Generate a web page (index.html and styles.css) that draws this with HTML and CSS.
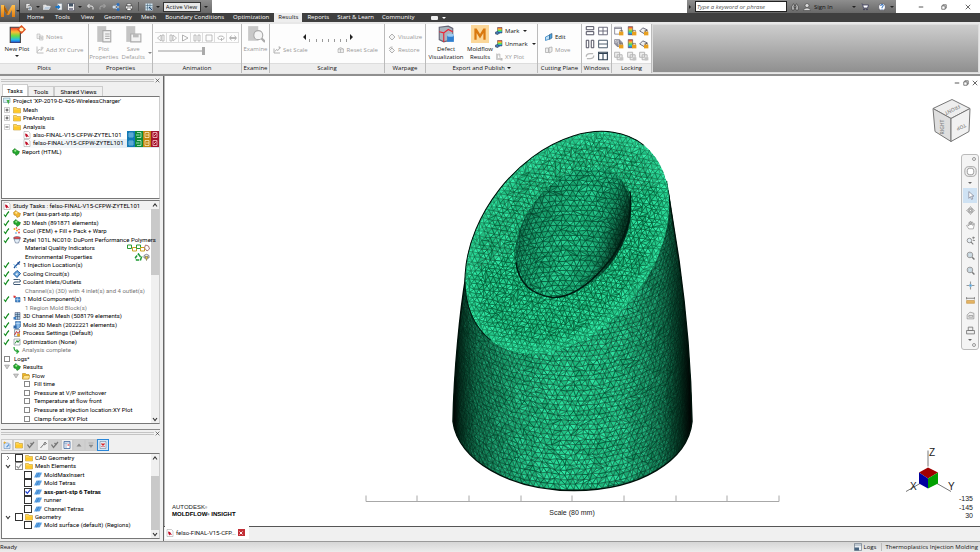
FILE: index.html
```
<!DOCTYPE html>
<html lang="en">
<head>
<meta charset="utf-8">
<title>Moldflow Insight</title>
<link rel="stylesheet" href="styles.css">
</head>
<body>
<svg class="defs" aria-hidden="true">
  <defs>
    <linearGradient id="rain" x1="0" y1="0" x2="0" y2="1"><stop offset="0" stop-color="#e33"/><stop offset=".3" stop-color="#fb3"/><stop offset=".55" stop-color="#6d4"/><stop offset=".8" stop-color="#2be"/><stop offset="1" stop-color="#23c"/></linearGradient>
    <linearGradient id="gold" x1="0" y1="0" x2="0" y2="1"><stop offset="0" stop-color="#ffc04d"/><stop offset="1" stop-color="#e07b10"/></linearGradient>
  </defs>
  <symbol id="logo" viewBox="0 0 16 16"><path d="M1 14V2h3l4 7 4-7h3v12h-3V7l-3 5H7L4 7v7z" fill="url(#gold)"/><path d="M4 2l4 7-1 3-3-5z" fill="#a85c08"/></symbol>
  <symbol id="pages" viewBox="0 0 16 16"><path d="M2 1h6l2 2v8H2zM6 5h5l3 3v7H6z" fill="#eee" stroke="#555"/><path d="M8 9h4M8 11h4M8 13h3" stroke="#68a"/></symbol>
  <symbol id="open" viewBox="0 0 16 16"><path d="M1 13V4h5l1 2h6v2" fill="#ddd" stroke="#eee"/><path d="M1 13l3-6h11l-3 6z" fill="#bcd" stroke="#eee"/></symbol>
  <symbol id="import" viewBox="0 0 16 16"><path d="M5 1h9v13H5z" fill="#f4f4f4" stroke="#789"/><path d="M1 6h5V3l5 5-5 5v-3H1z" fill="#1976c9"/></symbol>
  <symbol id="newlay" viewBox="0 0 16 16"><path d="M2 4h9l3 3v8H2z" fill="#d8e8f8" stroke="#4a7ab0"/><path d="M6 12l5-6 2 2-5 5z" fill="#5a94d4"/><path d="M3 1v5M1 3h5" stroke="#e8a820" stroke-width="1.500"/></symbol>
  <symbol id="save" viewBox="0 0 16 16"><path d="M1 1h14v14H1z" fill="#eee" stroke="#334"/><path d="M4 1h8v6H4z" fill="#456"/><path d="M4 10h8v5H4z" fill="#889"/></symbol>
  <symbol id="undo" viewBox="0 0 16 16"><path d="M14 13V9q0-3-4-3H4M7 2L3 6l4 4" fill="none" stroke="#eee" stroke-width="2"/></symbol>
  <symbol id="redo" viewBox="0 0 16 16"><path d="M2 13V9q0-3 4-3h6M9 2l4 4-4 4" fill="none" stroke="#aaa" stroke-width="2"/></symbol>
  <symbol id="share" viewBox="0 0 16 16"><path d="M12 3L4 8l8 5M12 3v10" fill="none" stroke="#cde" stroke-width="2"/><circle cx="12" cy="3" r="3" fill="#2a6fc0"/><circle cx="4" cy="8" r="3" fill="#cde"/><circle cx="12" cy="13" r="3" fill="#2a6fc0"/></symbol>
  <symbol id="print" viewBox="0 0 16 16"><path d="M4 1h8v5H4zM1 6h14v6H1z" fill="#eee" stroke="#333"/><path d="M4 10h8v5H4z" fill="#fff" stroke="#333"/></symbol>
  <symbol id="grid" viewBox="0 0 16 16"><path d="M1 1h14v14H1z" fill="#cfe3f2"/><path d="M1 5h14M1 10h14M5 1v14M10 1v14" stroke="#356" /><path d="M8 8l6 6" stroke="#247" stroke-width="2"/></symbol>
  <symbol id="binoc" viewBox="0 0 16 16"><path d="M2 14V7l2-5h2v12zM14 14V7l-2-5h-2v12zM6 6h4v3H6z" fill="#ddd" stroke="#222"/></symbol>
  <symbol id="user" viewBox="0 0 16 16"><circle cx="8" cy="5" r="4" fill="#ddd" stroke="#333"/><path d="M1 15q0-5 7-5t7 5z" fill="#ddd" stroke="#333"/></symbol>
  <symbol id="cart" viewBox="0 0 16 16"><path d="M1 2h2l2 8h8l2-6H4" fill="#fff" stroke="#335" stroke-width="1.5"/><circle cx="6" cy="13" r="1.5" fill="#335"/><circle cx="12" cy="13" r="1.5" fill="#335"/></symbol>
  <symbol id="help" viewBox="0 0 16 16"><circle cx="8" cy="8" r="7" fill="#fff" stroke="#223"/><path d="M5.500 6q0-3 2.500-3t2.500 2.500q0 1.500-2.500 3V10M8 11.500v2" fill="none" stroke="#1b5fb5" stroke-width="2"/></symbol>
  <symbol id="min" viewBox="0 0 16 16"><path d="M2 8h12" stroke="#222" stroke-width="2"/></symbol>
  <symbol id="max" viewBox="0 0 16 16"><path d="M2 5h9v9H2zM5 5V2h9v9h-3" fill="none" stroke="#222" stroke-width="1.500"/></symbol>
  <symbol id="close" viewBox="0 0 16 16"><path d="M2 2l12 12M14 2L2 14" stroke="#222" stroke-width="1.800"/></symbol>
  <symbol id="newplot" viewBox="0 0 16 16"><path d="M2 2h9v14H2z" fill="url(#rain)" stroke="#444"/><path d="M12 0l4 4-4 4-4-4z" fill="#e0521c"/><circle cx="12" cy="4" r="1.800" fill="#fff3c0"/></symbol>
  <symbol id="notes" viewBox="0 0 16 16"><path d="M2 2h6v9H2zM7 6h7v8H7z" fill="#eee" stroke="#aaa"/><path d="M9 9h4M9 11h4" stroke="#aaa"/></symbol>
  <symbol id="curve" viewBox="0 0 16 16"><path d="M2 1v13h13M3 11l4-5 3 3 4-6" fill="none" stroke="#aaa" stroke-width="1.500"/><circle cx="12" cy="4" r="2" fill="#eee" stroke="#aaa"/></symbol>
  <symbol id="pprop" viewBox="0 0 16 16"><path d="M2 1h8v14H2z" fill="#c4c4c4"/><path d="M7 5h7v10H7z" fill="#f2f2f2" stroke="#aaa"/><path d="M9 8h4M9 10h4M9 12h4" stroke="#aaa"/></symbol>
  <symbol id="psave" viewBox="0 0 16 16"><path d="M2 1h8v14H2z" fill="#c4c4c4"/><path d="M6 8h9v7H6z" fill="#f2f2f2" stroke="#aaa"/><path d="M8 8h5v3H8z" fill="#bbb"/></symbol>
  <symbol id="exam" viewBox="0 0 16 16"><path d="M1 1h9v13H1z" fill="#c8c8c8"/><circle cx="10" cy="9" r="4" fill="#f4f4f4" stroke="#aaa"/><path d="M13 12l3 3" stroke="#aaa" stroke-width="2"/></symbol>
  <symbol id="a1" viewBox="0 0 16 16"><path d="M8 2v12L1 8zM10 2v12h4V2z" fill="none" stroke="#aaa" stroke-width="1.500"/></symbol>
  <symbol id="a2" viewBox="0 0 16 16"><path d="M8 2v12l7-6zM2 2v12h4V2z" fill="none" stroke="#aaa" stroke-width="1.500"/></symbol>
  <symbol id="a3" viewBox="0 0 16 16"><path d="M3 2v12l11-6z" fill="none" stroke="#999" stroke-width="1.500"/></symbol>
  <symbol id="a4" viewBox="0 0 16 16"><path d="M2 2v12h4V2zM10 2v12h4V2z" fill="none" stroke="#aaa" stroke-width="1.500"/></symbol>
  <symbol id="a5" viewBox="0 0 16 16"><path d="M2 2h12v12H2z" fill="none" stroke="#aaa" stroke-width="1.500"/></symbol>
  <symbol id="a6" viewBox="0 0 16 16"><path d="M5 11Q1 10 2 7t6-3 6 3-3 4H8M10 8l-3 3 3 3" fill="none" stroke="#a0a0a0" stroke-width="1.500"/></symbol>
  <symbol id="a7" viewBox="0 0 16 16"><path d="M5 3L1 8l4 5M11 3l4 5-4 5M2 7h12M2 9h12" fill="none" stroke="#a0a0a0" stroke-width="1.500"/></symbol>
  <symbol id="scale" viewBox="0 0 16 16"><path d="M2 5v9h12M4 11l3-4 3 2 4-6M11 2h3v3" fill="none" stroke="#999" stroke-width="1.500"/></symbol>
  <symbol id="reset" viewBox="0 0 16 16"><path d="M2 6l5-3 6 3v7H2zM2 6h11M7 6v7" fill="#eee" stroke="#999"/></symbol>
  <symbol id="diam" viewBox="0 0 16 16"><path d="M8 2l6 6-6 6-6-6z" fill="#f4f4f4" stroke="#999" stroke-width="1.500"/></symbol>
  <symbol id="diam2" viewBox="0 0 16 16"><path d="M8 4l5 5-5 5-5-5zM2 6q2-5 7-4" fill="#f4f4f4" stroke="#999" stroke-width="1.500"/></symbol>
  <symbol id="defect" viewBox="0 0 16 16"><path d="M2 2l8-1 4 2v10l-8 2-4-2z" fill="#aab4bd" stroke="#667"/><path d="M2 6l4 1 4-3 4 2M6 7v8" stroke="#e23" fill="none"/><path d="M9 9h6v6H9z" fill="#2f7fd0"/><ellipse cx="12" cy="9" rx="3" ry="1.500" fill="#9ccbf2"/></symbol>
  <symbol id="mbox" viewBox="0 0 16 16"><path d="M0 0h16v16H0z" fill="#fbd79a"/><path d="M3 13V3h2l3 5 3-5h2v10h-2V7l-3 5-3-5v6z" fill="#d9780f"/></symbol>
  <symbol id="mark" viewBox="0 0 16 16"><path d="M5 1h9v11H5z" fill="url(#rain)" stroke="#444"/><path d="M1 10l4-1 4 3-3 3-5-1z" fill="#4377b5" stroke="#234"/></symbol>
  <symbol id="xyp" viewBox="0 0 16 16"><path d="M3 1v12h11M5 2h5v9H5z" fill="#ddd" stroke="#aaa"/><path d="M11 10h4v5h-4z" fill="#bbb"/></symbol>
  <symbol id="edit" viewBox="0 0 16 16"><path d="M1 8l8-4v8l-8 3z" fill="#bfe0f5" stroke="#2b7fc0" stroke-width="1.500"/><path d="M9 3l5-2v9l-5 3z" fill="#4fa3dc" stroke="#246"/></symbol>
  <symbol id="move" viewBox="0 0 16 16"><path d="M1 4h6v9H1zM8 3l6-1v9l-6 3z" fill="#eee" stroke="#aaa" stroke-width="1.500"/></symbol>
  <symbol id="w1" viewBox="0 0 16 16"><path d="M2 1h12v5H2zM2 9h12v5H2z" fill="#fff" stroke="#445" stroke-width="1.500"/></symbol>
  <symbol id="w2" viewBox="0 0 16 16"><path d="M1 2h14v12H1zM1 8h14M8 2v12" fill="#fff" stroke="#667" stroke-width="1.500"/></symbol>
  <symbol id="w3" viewBox="0 0 16 16"><path d="M2 2h4v12H2zM10 2h4v12h-4z" fill="#fff" stroke="#445" stroke-width="1.500"/></symbol>
  <symbol id="w4" viewBox="0 0 16 16"><path d="M1 2h14v12H1zM1 8h14" fill="#fff" stroke="#456" stroke-width="1.500"/></symbol>
  <symbol id="w5" viewBox="0 0 16 16"><path d="M2 9q0-5 6-5h5M14 7q0 5-6 5H3" fill="none" stroke="#b8b8b8" stroke-width="2"/></symbol>
  <symbol id="w6" viewBox="0 0 16 16"><path d="M1 2h14v12H1zM8 4v10M1 4h14" fill="#fff" stroke="#345" stroke-width="1.800"/></symbol>
  <symbol id="k1" viewBox="0 0 16 16"><path d="M1 2h11v11H1zM1 4h11" fill="#fff" stroke="#556"/><path d="M8 9h7v6H8z" fill="#e8a020"/><path d="M9.500 9V7h4v2" fill="none" stroke="#654"/></symbol>
  <symbol id="k1b" viewBox="0 0 16 16"><path d="M1 1h8v7H1zM3 3h8v7H3zM5 5h8v7H5z" fill="#fff" stroke="#556"/><path d="M8 9h7v6H8z" fill="#e8a020"/><path d="M9.500 9V7h4v2" fill="none" stroke="#654"/></symbol>
  <symbol id="k2" viewBox="0 0 16 16"><path d="M2 1h7v13H2z" fill="url(#rain)" stroke="#555"/><path d="M8 9h7v6H8z" fill="#e8a020"/><path d="M9.500 9V7h4v2" fill="none" stroke="#654"/></symbol>
  <symbol id="k3" viewBox="0 0 16 16"><path d="M1 8l5-5 7 3-5 6z" fill="#eee" stroke="#667" stroke-width="1.500"/><path d="M8 9h7v6H8z" fill="#e8a020"/><path d="M9.500 9V7h4v2" fill="none" stroke="#654"/></symbol>
  <symbol id="k4" viewBox="0 0 16 16"><path d="M1 2h8v8H1zM5 6h8v8H5z" fill="#eee" stroke="#b4b4b4" stroke-width="1.500"/><path d="M9 10h6v5H9z" fill="#c4c4c4"/></symbol>
  <symbol id="folder" viewBox="0 0 16 16"><path d="M1 3h6l1 2h7v9H1z" fill="#ffd75e" stroke="#b98a12"/><path d="M2 7h12v6H2z" fill="#ffc928"/></symbol>
  <symbol id="folder2" viewBox="0 0 16 16"><path d="M1 3h6l1 2h6v9H1z" fill="#f5b820" stroke="#a87a08"/><path d="M1 14l3-7h12l-3 7z" fill="#ffe28a" stroke="#b98a12"/></symbol>
  <symbol id="proj" viewBox="0 0 16 16"><path d="M1 2h13v9H1z" fill="#d8ecf5" stroke="#5a8a9a"/><path d="M7 6h6l-2 9z" fill="#3fae3f"/></symbol>
  <symbol id="study" viewBox="0 0 16 16"><path d="M2 1h9l3 3v11H2z" fill="#fff" stroke="#999"/><path d="M4 5l4 1 4 6-4-1-1 2-2-3z" fill="#c01028"/></symbol>
  <symbol id="green" viewBox="0 0 16 16"><path d="M1 5l5-4 4 4 5 2-2 5-5 3-2-4-4-1z" fill="#25a82e" stroke="#0c6a18"/><path d="M4 5l3-2 2 3-3 2z" fill="#9be88e"/></symbol>
  <symbol id="part" viewBox="0 0 16 16"><path d="M1 5l5-4 4 4 5 2-2 6-5 2-2-4-4-1z" fill="#f2b632" stroke="#a9720a"/><path d="M4 5l3-2 2 3-3 2z" fill="#ffeaa0"/></symbol>
  <symbol id="cool" viewBox="0 0 16 16"><circle cx="3" cy="4" r="2" fill="#f1a31c"/><circle cx="7" cy="2" r="1.500" fill="#d22"/><circle cx="8" cy="7" r="2" fill="#f1a31c"/><circle cx="12" cy="5" r="1.500" fill="#d22"/><circle cx="12" cy="11" r="2" fill="#e55"/><circle cx="6" cy="12" r="1.500" fill="#28c"/></symbol>
  <symbol id="mat" viewBox="0 0 16 16"><ellipse cx="8" cy="4" rx="7" ry="3" fill="#e84848" stroke="#457"/><path d="M2 6h12l-3 8H5z" fill="#e3eef8" stroke="#457"/></symbol>
  <symbol id="inj" viewBox="0 0 16 16"><path d="M14 1L5 10M9 3l4 4M2 14l4-5" stroke="#1e4f96" stroke-width="2.500"/><path d="M1 6l7 8" stroke="#49a3e0" stroke-width="1.500"/></symbol>
  <symbol id="circ" viewBox="0 0 16 16"><path d="M8 1l7 6-7 8-7-7z" fill="#7cb8ea" stroke="#15539c" stroke-width="2"/><path d="M5 8l3-3 3 3-3 3" fill="#fff" stroke="#15539c"/></symbol>
  <symbol id="inlet" viewBox="0 0 16 16"><path d="M1 3h10q4 0 4 3t-4 2H4q-3 0-3 3t3 2h11" fill="none" stroke="#3d5874" stroke-width="2"/></symbol>
  <symbol id="mold" viewBox="0 0 16 16"><path d="M5 5h9v9H5z" fill="#4c8fd0" stroke="#124b8c"/><path d="M5 9h9M9 5v9" stroke="#cde"/><path d="M1 1l5 1-2 4-3-1z" fill="#d33"/></symbol>
  <symbol id="mold2" viewBox="0 0 16 16"><path d="M5 1h10v10l-4 4H5z" fill="#6ba4dc" stroke="#124b8c"/><path d="M5 5h10M10 1v13" stroke="#def"/><path d="M1 9h6v6H1z" fill="#2c66a8"/></symbol>
  <symbol id="chm" viewBox="0 0 16 16"><path d="M4 1h10v14H4z" fill="#a9c4dc" stroke="#446"/><path d="M4 5h10M4 9h10M9 1v14" stroke="#246"/><path d="M1 10h5v5H1z" fill="#3a7cc4"/></symbol>
  <symbol id="proc" viewBox="0 0 16 16"><path d="M3 1h10v14H3z" fill="#e4edf6" stroke="#456"/><path d="M3 12l4-7 3 4 4-5" stroke="#c33" fill="none" stroke-width="2"/><circle cx="11" cy="12" r="3" fill="#e8a020"/></symbol>
  <symbol id="opt" viewBox="0 0 16 16"><path d="M2 2h12v12H2z" fill="#fff" stroke="#567"/><path d="M4 11l4-6 2 4 3-5" stroke="#2a8c3a" fill="none" stroke-width="2"/></symbol>
  <symbol id="done" viewBox="0 0 16 16"><path d="M4 2q0 9 8 9M9 7l4 4-4 4" stroke="#2aa53a" fill="none" stroke-width="2.500"/></symbol>
  <symbol id="tick" viewBox="0 0 16 16"><path d="M2 9l3 4Q8 7 12 3" fill="none" stroke="#108a1c" stroke-width="2.300"/></symbol>
  <symbol id="layer" viewBox="0 0 16 16"><path d="M5 3h11l-5 10H0z" fill="#6aaeec"/><path d="M4 6h11M2 10h11M10 3L5 13" stroke="#2b6cb8"/></symbol>
  <symbol id="plus" viewBox="0 0 16 16"><path d="M3 3h10v10H3z" fill="#fff" stroke="#999"/><path d="M5 8h6M8 5v6" stroke="#222" stroke-width="1.500"/></symbol>
  <symbol id="minus" viewBox="0 0 16 16"><path d="M3 3h10v10H3z" fill="#fff" stroke="#aaa"/><path d="M5 8h6" stroke="#222" stroke-width="1.500"/></symbol>
  <symbol id="down" viewBox="0 0 16 16"><path d="M4 6l4 5 4-5" fill="none" stroke="#333" stroke-width="2.200"/></symbol>
  <symbol id="up" viewBox="0 0 16 16"><path d="M4 11l4-5 4 5" fill="none" stroke="#333" stroke-width="2.200"/></symbol>
  <symbol id="right" viewBox="0 0 16 16"><path d="M6 4l4 4-4 4" fill="none" stroke="#888" stroke-width="2"/></symbol>
  <symbol id="tri" viewBox="0 0 16 16"><path d="M3 4h10l-5 8z" fill="#ccc" stroke="#888"/></symbol>
  <symbol id="quality" viewBox="0 0 48 16"><g fill="#fff" stroke-width="2"><path d="M2 2h8v7H2z" stroke="#2c9a35"/><path d="M12 7h8v7h-8z" stroke="#c9a11c"/><path d="M20 2h8v7h-8z" stroke="#2c9a35"/><path d="M28 7h8v7h-8z" stroke="#c9a11c"/><path d="M38 2l6 2 2 6-5 4-5-6z" stroke="#a77"/></g></symbol>
  <symbol id="env" viewBox="0 0 32 16"><path d="M8 2l4 6h2l-2 6H4L2 9z" fill="none" stroke="#1f9a35" stroke-width="3" stroke-dasharray="7 2"/><path d="M19 5q5-5 10 0v5H19z" fill="#eee" stroke="#667" stroke-width="1.500"/><path d="M21 7h6l-3 8z" fill="#eec93a" stroke="#554"/></symbol>
  <symbol id="wheel" viewBox="0 0 16 16"><rect x="1" y="2" width="14" height="12" rx="5" fill="#eee" stroke="#999"/><rect x="4" y="4" width="8" height="8" rx="3" fill="#fff" stroke="#888"/></symbol>
  <symbol id="cursor" viewBox="0 0 16 16"><path d="M5 1v12l3-3 2 5 2-1-2-5h4z" fill="#fff" stroke="#667"/></symbol>
  <symbol id="orbit" viewBox="0 0 16 16"><path d="M8 1l3 4H5zM8 15l3-4H5zM1 8l4-3v6zM15 8l-4-3v6z" fill="#eee" stroke="#777"/><circle cx="8" cy="8" r="2" fill="none" stroke="#777"/></symbol>
  <symbol id="hand" viewBox="0 0 16 16"><path d="M5 14L1 8l2-1 2 2V3h2v4V1h2v6l1-5h2v6l2-4 1 1-2 9z" fill="#fff" stroke="#777"/></symbol>
  <symbol id="zoomi" viewBox="0 0 16 16"><circle cx="7" cy="7" r="5" fill="#e6eef4" stroke="#888" stroke-width="1.500"/><path d="M11 11l4 4" stroke="#777" stroke-width="2.500"/><path d="M5 5h4v4H5z" fill="#fff" stroke="#8ab"/></symbol>
  <symbol id="zoompm" viewBox="0 0 16 16"><circle cx="6" cy="8" r="4" fill="#e6eef4" stroke="#888" stroke-width="1.500"/><path d="M9 11l4 4" stroke="#777" stroke-width="2"/><path d="M11 3h5M13 1v5M12 8h4" stroke="#555"/></symbol>
  <symbol id="cross" viewBox="0 0 16 16"><path d="M8 1v5M8 10v5M1 8h5M10 8h5" stroke="#999" stroke-width="2"/><path d="M6 6h4v4H6z" fill="#4fa3dc"/></symbol>
  <symbol id="measure" viewBox="0 0 16 16"><path d="M1 4h14M1 2v4M15 2v4" stroke="#777" stroke-width="1.500"/><path d="M1 8h14v5H1z" fill="#e5b464" stroke="#c08f3c"/></symbol>
  <symbol id="home" viewBox="0 0 16 16"><path d="M2 7l5-5 7 2v10H2zM5 8h7v3H5z" fill="#eee" stroke="#777"/></symbol>
  <symbol id="stack" viewBox="0 0 16 16"><path d="M4 2h8v6H4zM1 8h14v6H1z" fill="#eee" stroke="#777" stroke-width="1.500"/></symbol>
  <symbol id="logs" viewBox="0 0 16 16"><path d="M1 1h14v14H1z" fill="#e8eef4" stroke="#456"/><path d="M1 4h14" stroke="#456"/><path d="M1 9h9v6H1z" fill="#47637f"/></symbol>
  <symbol id="delx" viewBox="0 0 16 16"><path d="M2 1h12v14H2z" fill="#dfeaf5" stroke="#678"/><path d="M5 5l6 6M11 5l-6 6" stroke="#d22" stroke-width="2.500"/></symbol>
  <symbol id="gray" viewBox="0 0 16 16"><path d="M1 7l4 6 4-5 5-6M7 4l4 4" fill="none" stroke="#777" stroke-width="2.500"/></symbol>
  <symbol id="wand" viewBox="0 0 16 16"><path d="M3 14l6-7M9 7l3-5 3 3-5 3z" fill="#ddd" stroke="#777" stroke-width="2"/></symbol>
  <symbol id="gup" viewBox="0 0 16 16"><path d="M3 11h10L8 5z" fill="#888"/></symbol>
  <symbol id="gdn" viewBox="0 0 16 16"><path d="M3 4h10M4 8h8l-4 5z" fill="#888" stroke="#888"/></symbol>
  <symbol id="colmn" viewBox="0 0 16 16"><path d="M2 1h12v14H2z" fill="#fff" stroke="#35609c" stroke-width="1.500"/><path d="M2 4h12M6 4v11" stroke="#35609c"/><path d="M9 6h4v4H9z" fill="#e88"/></symbol>
  <symbol id="s1" viewBox="0 0 16 16"><path d="M0 0h16v16H0z" fill="#1279b5"/><path d="M4 4h8v8H4zM4 8h8M8 4v8" stroke="#bfe4fa" fill="none"/></symbol>
  <symbol id="s2" viewBox="0 0 16 16"><path d="M0 0h16v16H0z" fill="#0f8a35"/><path d="M4 3h8v10H4M2 8h7" stroke="#d0f5d8" fill="none" stroke-width="1.500"/></symbol>
  <symbol id="s3" viewBox="0 0 16 16"><path d="M0 0h16v16H0z" fill="#c08410"/><path d="M4 3h8v10H4zM6 8h6" stroke="#fff0c8" fill="none" stroke-width="1.500"/></symbol>
  <symbol id="s4" viewBox="0 0 16 16"><path d="M0 0h16v16H0z" fill="#a3142b"/><path d="M4 3h8v10H4zM6 10l5-5" stroke="#ffd0d8" fill="none" stroke-width="1.500"/></symbol>
</svg>

<header class="top">
  <button class="app" aria-label="Application menu"><svg><use href="#logo"/></svg><i class="car"></i></button>
  <div class="title">
    <div class="qat">
      <svg><use href="#pages"/></svg><i class="car"></i><svg><use href="#open"/></svg><svg><use href="#import"/></svg><svg><use href="#save"/></svg><i class="car"></i><svg><use href="#undo"/></svg><svg><use href="#redo"/></svg><svg><use href="#share"/></svg><svg><use href="#print"/></svg><span class="sep"></span><svg><use href="#grid"/></svg><i class="car"></i>
      <select aria-label="View"><option>Active View</option></select><i class="car"></i>
    </div>
    <div class="info">
      <i class="side"></i><input type="text" aria-label="Search" placeholder="Type a keyword or phrase"><svg><use href="#binoc"/></svg><svg><use href="#user"/></svg><a href="#">Sign In</a><i class="car push"></i><svg class="cart"><use href="#cart"/></svg><svg><use href="#help"/></svg><i class="car"></i>
    </div>
    <div class="win"><button aria-label="Minimize"><svg><use href="#min"/></svg></button><button aria-label="Restore"><svg><use href="#max"/></svg></button><button aria-label="Close"><svg><use href="#close"/></svg></button></div>
  </div>
  <nav class="menu">
    <a href="#">Home</a><a href="#">Tools</a><a href="#">View</a><a href="#">Geometry</a><a href="#">Mesh</a><a href="#">Boundary Conditions</a><a href="#">Optimization</a><a href="#" class="on">Results</a><a href="#">Reports</a><a href="#">Start &amp; Learn</a><a href="#">Community</a><span class="rec"></span><i class="car"></i>
  </nav>
</header>

<section class="ribbon">
  <div class="grp g-plots"><div class="body">
    <button class="big"><svg><use href="#newplot"/></svg>New Plot<i class="car"></i></button>
    <div class="col off"><button><svg><use href="#notes"/></svg>Notes</button><button><svg><use href="#curve"/></svg>Add XY Curve</button></div>
  </div><h2>Plots</h2></div>
  <div class="grp g-prop"><div class="body off">
    <button class="big"><svg><use href="#pprop"/></svg>Plot<br>Properties</button><button class="big"><svg><use href="#psave"/></svg>Save<br>Defaults</button><i class="car"></i>
  </div><h2>Properties</h2></div>
  <div class="grp g-anim"><div class="body stack">
    <div class="play"><button aria-label="Back"><svg><use href="#a1"/></svg></button><button aria-label="Forward"><svg><use href="#a2"/></svg></button><button aria-label="Play"><svg><use href="#a3"/></svg></button><button aria-label="Pause"><svg><use href="#a4"/></svg></button><button aria-label="Stop"><svg><use href="#a5"/></svg></button><button aria-label="Loop"><svg><use href="#a6"/></svg></button><button aria-label="Bounce"><svg><use href="#a7"/></svg></button></div>
    <input type="range" aria-label="Frame" value="100">
  </div><h2>Animation</h2></div>
  <div class="grp g-exam"><div class="body off"><button class="big"><svg><use href="#exam"/></svg>Examine</button></div><h2>Examine</h2></div>
  <div class="grp g-scal"><div class="body stack">
    <svg class="ruler" viewBox="0 0 52 8"><path d="M4 0v6L1 3zM48 0v6l3-3z" fill="#222"/><path d="M7.500 5v3M14.500 5v3M20.500 5v3M26.500 5v3M32.500 5v3M38.500 5v3M44.500 5v3" stroke="#999"/></svg>
    <div class="row off"><button><svg><use href="#scale"/></svg>Set Scale</button><button><svg><use href="#reset"/></svg>Reset Scale</button></div>
  </div><h2>Scaling</h2></div>
  <div class="grp g-warp"><div class="body"><div class="col off"><button><svg><use href="#diam"/></svg>Visualize</button><button><svg><use href="#diam2"/></svg>Restore</button></div></div><h2>Warpage</h2></div>
  <div class="grp g-exp"><div class="body">
    <button class="big"><svg><use href="#defect"/></svg>Defect<br>Visualization</button><button class="big"><svg><use href="#mbox"/></svg>Moldflow<br>Results</button>
    <div class="col three"><button><svg><use href="#mark"/></svg>Mark<i class="car"></i></button><button><svg><use href="#mark"/></svg>Unmark<i class="car"></i></button><button class="off"><svg><use href="#xyp"/></svg>XY Plot</button></div>
  </div><h2>Export and Publish <i class="car"></i></h2></div>
  <div class="grp g-cut"><div class="body"><div class="col"><button><svg><use href="#edit"/></svg>Edit</button><button class="off"><svg><use href="#move"/></svg>Move</button></div></div><h2>Cutting Plane</h2></div>
  <div class="grp g-win"><div class="icons two"><svg><use href="#w1"/></svg><svg><use href="#w2"/></svg><svg><use href="#w3"/></svg><svg><use href="#w4"/></svg><svg><use href="#w5"/></svg><svg><use href="#w6"/></svg></div><h2>Windows</h2></div>
  <div class="grp g-lock"><div class="icons"><svg><use href="#k1"/></svg><svg><use href="#k2"/></svg><svg><use href="#k3"/></svg><svg><use href="#k1b"/></svg><svg><use href="#k2"/></svg><svg><use href="#k3"/></svg><svg><use href="#k4"/></svg><svg><use href="#k4"/></svg><svg><use href="#k4"/></svg></div><h2>Locking</h2></div>
  <div class="rest"></div>
</section>

<main>
  <aside>
    <div class="grip"><span></span><button aria-label="Close pane"><svg><use href="#close"/></svg></button></div>
    <div class="tabs"><button class="on">Tasks</button><button>Tools</button><button>Shared Views</button></div>
    <div class="box tasks"><div class="tree">
      <div class="r"><svg><use href="#proj"/></svg>Project 'XP-2019-D-426-WirelessCharger'</div>
      <div class="r"><svg><use href="#plus"/></svg><svg><use href="#folder"/></svg>Mesh</div>
      <div class="r"><svg><use href="#plus"/></svg><svg><use href="#folder"/></svg>PreAnalysis</div>
      <div class="r"><svg><use href="#minus"/></svg><svg><use href="#folder"/></svg>Analysis</div>
      <div class="r in"><svg><use href="#study"/></svg>also-FINAL-V15-CFPW-ZYTEL101<span class="chips"><svg><use href="#s1"/></svg><svg><use href="#s2"/></svg><svg><use href="#s3"/></svg><svg><use href="#s4"/></svg></span></div>
      <div class="r in sel"><svg><use href="#study"/></svg>felso-FINAL-V15-CFPW-ZYTEL101<span class="chips"><svg><use href="#s1"/></svg><svg><use href="#s2"/></svg><svg><use href="#s3"/></svg><svg><use href="#s4"/></svg></span></div>
      <div class="r rep"><svg><use href="#green"/></svg>Report (HTML)</div>
    </div></div>
    <div class="box study"><div class="tree">
      <div class="r head"><svg><use href="#study"/></svg>Study Tasks : felso-FINAL-V15-CFPW-ZYTEL101</div>
      <div class="r"><svg><use href="#tick"/></svg><svg><use href="#part"/></svg>Part (ass-part-stp.stp)</div>
      <div class="r"><svg><use href="#tick"/></svg><svg><use href="#green"/></svg>3D Mesh (891871 elements)</div>
      <div class="r"><svg><use href="#tick"/></svg><svg><use href="#cool"/></svg>Cool (FEM) + Fill + Pack + Warp</div>
      <div class="r"><svg><use href="#tick"/></svg><svg><use href="#mat"/></svg>Zytel 101L NC010: DuPont Performance Polymers</div>
      <div class="r sub">Material Quality Indicators<svg class="qual"><use href="#quality"/></svg></div>
      <div class="r sub">Environmental Properties<svg class="envi"><use href="#env"/></svg></div>
      <div class="r"><svg><use href="#tick"/></svg><svg><use href="#inj"/></svg>1 Injection Location(s)</div>
      <div class="r"><svg><use href="#tick"/></svg><svg><use href="#circ"/></svg>Cooling Circuit(s)</div>
      <div class="r"><svg><use href="#tick"/></svg><svg><use href="#inlet"/></svg>Coolant Inlets/Outlets</div>
      <div class="r sub dim">Channel(s) (3D) with 4 inlet(s) and 4 outlet(s)</div>
      <div class="r"><svg><use href="#tick"/></svg><svg><use href="#mold"/></svg>1 Mold Component(s)</div>
      <div class="r sub dim">1 Region Mold Block(s)</div>
      <div class="r"><svg><use href="#tick"/></svg><svg><use href="#chm"/></svg>3D Channel Mesh (508179 elements)</div>
      <div class="r"><svg><use href="#tick"/></svg><svg><use href="#mold2"/></svg>Mold 3D Mesh (2022221 elements)</div>
      <div class="r"><svg><use href="#tick"/></svg><svg><use href="#proc"/></svg>Process Settings (Default)</div>
      <div class="r"><svg><use href="#tick"/></svg><svg><use href="#opt"/></svg>Optimization (None)</div>
      <div class="r rep dim"><svg><use href="#done"/></svg>Analysis complete</div>
      <label class="r"><input type="checkbox">Logs*</label>
      <div class="r"><svg><use href="#tri"/></svg><svg><use href="#green"/></svg>Results</div>
      <div class="r rep"><svg><use href="#tri"/></svg><svg><use href="#folder2"/></svg>Flow</div>
      <label class="r in"><input type="checkbox">Fill time</label>
      <label class="r in"><input type="checkbox">Pressure at V/P switchover</label>
      <label class="r in"><input type="checkbox">Temperature at flow front</label>
      <label class="r in"><input type="checkbox">Pressure at injection location:XY Plot</label>
      <label class="r in"><input type="checkbox">Clamp force:XY Plot</label>
    </div><div class="bar"><svg><use href="#up"/></svg><span class="thumb"></span><svg><use href="#down"/></svg></div></div>
    <div class="grip second"><span></span><button aria-label="Close pane"><svg><use href="#close"/></svg></button></div>
    <div class="tools"><button aria-label="New layer"><svg><use href="#newlay"/></svg></button><button aria-label="New folder"><svg><use href="#folder"/></svg></button><button class="no" aria-label="Activate"><svg><use href="#gray"/></svg></button><button aria-label="Edit"><svg><use href="#wand"/></svg></button><button class="no" aria-label="Assign"><svg><use href="#gray"/></svg></button><button aria-label="Columns"><svg><use href="#colmn"/></svg></button><button class="no" aria-label="Up"><svg><use href="#gup"/></svg></button><button class="no" aria-label="Down"><svg><use href="#gdn"/></svg></button><button class="act" aria-label="Clean"><svg><use href="#delx"/></svg></button></div>
    <div class="box layers"><div class="tree">
      <div class="r"><svg><use href="#right"/></svg><label><input type="checkbox"><svg><use href="#folder"/></svg>CAD Geometry</label></div>
      <div class="r"><svg><use href="#down"/></svg><label><input type="checkbox" class="half" checked><svg><use href="#folder"/></svg>Mesh Elements</label></div>
      <label class="r in"><input type="checkbox"><svg><use href="#layer"/></svg>MoldMaxInsert</label>
      <label class="r in"><input type="checkbox"><svg><use href="#layer"/></svg>Mold Tetras</label>
      <label class="r in"><input type="checkbox" checked><svg><use href="#layer"/></svg><b>ass-part-stp 6 Tetras</b></label>
      <label class="r in"><input type="checkbox"><svg><use href="#layer"/></svg>runner</label>
      <label class="r in"><input type="checkbox"><svg><use href="#layer"/></svg>Channel Tetras</label>
      <div class="r"><svg><use href="#down"/></svg><label><input type="checkbox"><svg><use href="#folder"/></svg>Geometry</label></div>
      <label class="r in"><input type="checkbox"><svg><use href="#layer"/></svg>Mold surface (default) (Regions)</label>
    </div><div class="bar low"><svg><use href="#up"/></svg><span class="thumb"></span><svg><use href="#down"/></svg></div></div>
  </aside>

  <section class="view">
    <div class="stage">
      <svg class="scene" viewBox="165 76 815 449">
        <defs>
          <linearGradient id="side" gradientUnits="userSpaceOnUse" x1="453" y1="0" x2="692" y2="0"><stop offset="0" stop-color="#000" stop-opacity="1"/><stop offset=".03" stop-color="#001a10" stop-opacity=".85"/><stop offset=".1" stop-color="#00291a" stop-opacity=".5"/><stop offset=".28" stop-color="#003020" stop-opacity=".12"/><stop offset=".45" stop-color="#003020" stop-opacity="0"/><stop offset=".7" stop-color="#003020" stop-opacity=".05"/><stop offset=".86" stop-color="#00291a" stop-opacity=".4"/><stop offset=".95" stop-color="#001a10" stop-opacity=".85"/><stop offset="1" stop-color="#000"/></linearGradient>
          <linearGradient id="bore" gradientUnits="userSpaceOnUse" x1="520" y1="215" x2="628" y2="250"><stop offset="0" stop-color="#002417" stop-opacity=".5"/><stop offset=".2" stop-color="#003020" stop-opacity=".25"/><stop offset=".5" stop-color="#003020" stop-opacity=".08"/><stop offset=".72" stop-color="#003020" stop-opacity=".25"/><stop offset=".88" stop-color="#001a10" stop-opacity=".75"/><stop offset="1" stop-color="#000" stop-opacity=".95"/></linearGradient>
          <radialGradient id="rim" gradientUnits="userSpaceOnUse" cx="0" cy="0" r="1" gradientTransform="translate(567 242) rotate(-52) scale(124 86)"><stop offset=".85" stop-color="#3dffb8" stop-opacity="0"/><stop offset="1" stop-color="#3dffb8" stop-opacity=".3"/></radialGradient>
          <linearGradient id="edge" gradientUnits="userSpaceOnUse" x1="520" y1="180" x2="580" y2="260"><stop offset="0" stop-color="#00120b"/><stop offset=".6" stop-color="#00120b"/><stop offset="1" stop-color="#00120b" stop-opacity="0"/></linearGradient>
          <clipPath id="cBody"><path d="M466 275C460 310 454 370 453 421C458 460 510 490 574 490C640 490 688 460 692 421C691 370 686 310 679 260L667 180Z"/></clipPath>
          <clipPath id="cFace"><ellipse cx="567" cy="242" rx="124" ry="86" transform="rotate(-52 567 242)"/></clipPath>
          <clipPath id="cBore"><ellipse cx="573" cy="232" rx="72" ry="49" transform="rotate(-54 573 232)"/></clipPath>
        </defs>
        <g clip-path="url(#cBody)"><g id="mBody"></g><path d="M440 120h260v380H440z" fill="url(#side)"/></g>
        <path d="M466 275C460 310 454 370 453 421C458 460 510 490 574 490C640 490 688 460 692 421C691 370 686 310 679 260L668 190" fill="none" stroke="#00120b" stroke-width="1.500"/>
        <g clip-path="url(#cFace)"><g id="mFace"></g><path d="M440 120h260v250H440z" fill="url(#rim)"/></g>
        <path d="M466 282C463 215 525 131 602 131C640 131 668 160 669 204" fill="none" stroke="none"/>
        <g transform="rotate(-52 567 242)"><path d="M443 242A124 86 0 0 1 691 242" fill="none" stroke="#00120b"/></g>
        <g clip-path="url(#cBore)"><g id="mBore"></g><path d="M500 150h140v160H500z" fill="url(#bore)"/></g>
        <path d="M516 262Q520 292 552 297Q580 298 612 257Q634 225 630 191" fill="none" stroke="#001a10" stroke-width="1.500"/>
        <path d="M366 495v6h413v-6M417 495v6M469 495v6M521 495v6M572 495v6M624 495v6M676 495v6M727 495v6" fill="none" stroke="#a8a8a8"/>
        <text x="572" y="514" text-anchor="middle" class="t7">Scale (80 mm)</text>
        <text x="172" y="508" class="brand">AUTODESK<tspan class="sup">®</tspan></text>
        <text x="172" y="515" class="brand bold">MOLDFLOW<tspan class="sup">®</tspan> INSIGHT</text>
        <g stroke="#777" stroke-linejoin="round"><path d="M933 108l19-9 18 9-19 10z" fill="#eee"/><path d="M933 108l18 10v23l-16-10z" fill="#dedede"/><path d="M970 108l-19 10v23l18-10z" fill="#f1f1f1"/></g>
        <g class="cube"><text transform="translate(959 104) rotate(153)">FRONT</text><text transform="translate(944 134) rotate(-90)">RIGHT</text><text transform="translate(965 123) rotate(155)">TOP</text></g>
        <g stroke="#777"><path d="M928 466v-16M920 483l-14 8M937 483l14 8"/></g>
        <path d="M919 472l9-5 10 5-10 6z" fill="#a00000"/><path d="M919 472l9 6v10l-9-5z" fill="#0000a0"/><path d="M938 472l-10 6v10l10-5z" fill="#00a000"/>
        <g class="axis"><text x="929" y="455">Z</text><text x="910" y="489">X</text><text x="948" y="489">Y</text></g>
        <g class="t7" text-anchor="end"><text x="973" y="500">-135</text><text x="973" y="509">-145</text><text x="973" y="517">30</text></g>
      </svg>
      <div class="mdi"><button aria-label="Minimize view"><svg><use href="#min"/></svg></button><button aria-label="Restore view"><svg><use href="#max"/></svg></button><button aria-label="Close view"><svg><use href="#close"/></svg></button></div>
      <div class="navbar"><i class="dot"></i><button aria-label="Wheel"><svg class="w"><use href="#wheel"/></svg></button><i class="car"></i><button class="act" aria-label="Select"><svg><use href="#cursor"/></svg></button><button aria-label="Orbit"><svg><use href="#orbit"/></svg></button><button aria-label="Pan"><svg><use href="#hand"/></svg></button><button aria-label="Zoom"><svg><use href="#zoompm"/></svg></button><button aria-label="Zoom window"><svg><use href="#zoomi"/></svg></button><button aria-label="Zoom fit"><svg><use href="#zoomi"/></svg></button><button aria-label="Center"><svg><use href="#cross"/></svg></button><button aria-label="Measure"><svg><use href="#measure"/></svg></button><button aria-label="Home"><svg><use href="#home"/></svg></button><button aria-label="Previous"><svg><use href="#stack"/></svg></button><i class="car"></i><i class="dot"></i></div>
    </div>
    <div class="docs"><button class="doc"><svg><use href="#study"/></svg>felso-FINAL-V15-CFP...<span class="x"><svg viewBox="0 0 16 16"><path d="M4 4l8 8M12 4l-8 8" stroke="#fff" stroke-width="2.500"/></svg></span></button></div>
  </section>
</main>

<footer><span>Ready</span><span class="lg"><svg><use href="#logs"/></svg>Logs</span><span class="end">Thermoplastics Injection Molding</span></footer>
<script src="mesh.js"></script>
</body>
</html>
```
FILE: styles.css
```
*{box-sizing:border-box}
html,body{height:100%}
body{margin:0;display:flex;flex-direction:column;font-family:"Open Sans","Noto Sans",sans-serif;font-size:6px;line-height:8px;color:#111;background:#f0f0f0;overflow:hidden}
button{font:inherit;color:inherit;background:none;border:0;padding:0;margin:0}
a{color:inherit;text-decoration:none}
svg{width:8px;height:8px;flex:none;display:block}
.defs{position:absolute;width:0;height:0}
.car{display:inline-block;width:0;height:0;border:2px solid transparent;border-top-color:#222;border-bottom:0;flex:none}

.top{display:grid;grid-template-columns:20px 1fr;grid-template-rows:13px 9px;background:#3f3f3f}
.app{grid-row:1/3;background:linear-gradient(#999,#4d4d4d);display:flex;align-items:center;border-right:1px solid #333}
.app svg{width:16px;height:18px}
.title{display:flex;background:#fff}
.qat,.info{display:flex;align-items:center;background:linear-gradient(#8e8e8e,#686868)}
.qat{width:192px;padding-left:5px;gap:4px}
.qat svg:nth-of-type(n+5){margin-left:1px}
.qat .car{margin:0 -1px}
.sep{width:1px;height:9px;background:#555;margin:0 1px}
.qat select{appearance:none;width:46px;height:10px;border:1px solid #333;border-radius:0;padding:0 2px;background:linear-gradient(#222,#222) 41px 3px/3px 2px no-repeat #e8e8e8;font:inherit;color:#111;margin-left:auto}
.qat .car:last-child{margin-right:4px}
.info{width:209px;margin-left:auto;gap:4px;padding:0 2px}
.info .side{border:2px solid transparent;border-left-color:#222;border-right:0}
.info input{width:92px;height:11px;border:1px solid #222;padding:0 1px;background:#fff;font:inherit;font-style:italic}
.info input::placeholder{color:#555}
.info a{margin-left:-1px}
.info .push{margin-left:auto}
.cart{margin:0 5px 0 1px}
.win{width:84px;display:flex;align-items:center;justify-content:space-around;padding:0 0 0 13px}
.win svg{width:6px;height:6px}
.menu{display:flex;align-items:center;gap:1px;color:#fff;line-height:9px;padding-left:2px}
.menu a{padding:0 4px}
.menu a:nth-child(-n+3){padding:0 5px}
.menu .on{background:#eee;color:#111}
.menu .on~a{padding:0 3px 0 4px}
.menu .rec{width:7px;height:4px;border-radius:1px;background:#eee;margin:0 3px 0 12px}
.menu .car{border-top-color:#fff}

.ribbon{display:flex;height:54px;padding:2px 1px 1px 0;background:#e8e8e8;border-bottom:2px solid #8f8f8f}
.grp{display:flex;flex-direction:column;flex:none;background:#fdfdfd;border-right:1px solid #bbb}
.grp h2{margin:0;font:inherit;line-height:9px;text-align:center;background:#ededed;border-top:1px solid #ddd}
.grp h2 .car{vertical-align:middle}
.g-plots{width:89px}.g-prop{width:64px}.g-anim{width:89px}.g-exam{width:28px}.g-scal{width:115px}.g-warp{width:41px}.g-exp{width:112px}.g-cut{width:44px}.g-win{width:30px}.g-lock{width:40px}
.rest{flex:1;background:linear-gradient(#cdcdcd,#8f8f8f);border:1px solid #ddd}
.body{flex:1;display:flex;min-height:0;white-space:nowrap}
.body button{display:flex;align-items:center;gap:2px}
.body .big{flex-direction:column;gap:0;width:34px;padding-top:1px;text-align:center}
.big svg{width:18px;height:18px;margin-bottom:2px}
.big .car{margin-top:2px}
.g-prop .big{width:30px}
.g-prop .body>.car{align-self:flex-end;margin-bottom:9px}
.g-exam .big{width:27px}
.g-exp .big:first-child{width:40px}
.g-exp .big{width:28px}
.col{display:flex;flex-direction:column;gap:5px;padding:9px 0 0 2px}
.three{padding:3px 0 0 1px}
.three .car{margin-left:2px}
.g-cut .col{padding-left:7px}
.g-warp .col{padding-left:3px}
.off{color:#999}
.off .car{border-top-color:#888}
.stack{flex-direction:column}
.play{display:flex;margin:8px 2px 0}
.play button{flex:1;height:11px;border:1px solid #ddd;border-left-width:0;justify-content:center}
.g-anim input{appearance:none;width:47px;height:9px;margin:3px 5px;background:linear-gradient(#ccc,#ccc) 0 4px/100% 2px no-repeat}
.g-anim input::-webkit-slider-thumb{appearance:none;width:3px;height:8px;background:#aaa}
.ruler{width:52px;height:8px;margin:10px 0 0 32px}
.row{display:flex;justify-content:space-between;padding:4px 6px 0 3px}
.icons{flex:1;display:grid;grid-template-columns:repeat(3,10px);justify-content:space-evenly;align-content:space-evenly;justify-items:center}
.two{grid-template-columns:repeat(2,10px)}
.icons svg{width:10px;height:10px}

main{flex:1;display:flex;min-height:0}
aside{width:164px;flex:none;display:grid;grid-template-rows:7px 12px 104fr 224fr 13px 15px 87fr;padding:1px 3px 1px 1px;border-right:1px solid #666;background:#f0f0f0;font-family:Roboto,"Liberation Sans",Arial,sans-serif;min-height:0;white-space:nowrap;color:#000}
.grip{display:flex;align-items:center;gap:1px}
.grip span{flex:1;height:3px;border:1px solid #c4c4c4;border-width:1px 0}
.grip svg{width:5px;height:5px}
.second{border-top:1px solid #888;margin-top:4px}
.tabs{display:flex;align-items:flex-end;padding-left:1px}
.tabs button{padding:0 5px;height:10px;border:1px solid #ccc;border-bottom:0}
.tabs .on{height:12px;background:#fff;padding:0 4px}
.box{display:flex;background:#fff;border:1px solid #777;border-right-color:#ccc;min-height:0;margin-bottom:1px}
.tree{flex:1;display:grid;grid-auto-rows:1fr;min-width:0;position:relative;z-index:1}
.tasks .tree{grid-template-rows:repeat(12,1fr)}
.layers .tree{grid-template-rows:repeat(10,1fr)}
.r,.r label{display:flex;align-items:center;gap:2px;min-width:0;min-height:0}
.r{padding-left:1px;overflow:visible}
.in{padding-left:21px}
.rep{padding-left:10px}
.sub{padding-left:23px}
.layers .r{padding-left:2px}
.layers .in{padding-left:21px}
.head{background:#f1f1f1}
.sel{background:linear-gradient(90deg,#fff,#dbe7f0)}
.dim{color:#777}
.chips{display:flex;margin-left:auto}
.qual{width:25px;margin-left:auto}
.envi{width:17px;margin-left:auto}
.r input{appearance:none;width:6px;height:6px;margin:0 2px 0 1px;border:1px solid #888;background:#fff;flex:none}
.layers .r input{width:8px;height:8px;margin:0 0 0 1px;border-color:#333}
.layers input:checked::before{content:"";display:block;width:6px;height:6px;background:#1c3fd0;clip-path:polygon(0 50%,20% 38%,38% 62%,85% 5%,100% 20%,40% 95%)}
.layers .half:checked::before{background:#999}
.layers .r .half{border-color:#888}
.bar{width:8px;background:#f0f0f0;display:flex;flex-direction:column}
.bar svg{height:8px}
.thumb{height:66px;background:#c9c9c9}
.bar svg:last-child{margin-top:auto}
.low .thumb{height:54px;margin-top:auto}
.low svg:last-child{margin-top:0}
.tools{display:flex;align-items:center;gap:0}
.tools button{width:12px;height:12px;border:1px solid #ccc;display:grid;place-items:center}
.tools .no{background:#d0d0d0}
.tools .act{border-color:#2a86d8;background:#cfe6f8}

.view{flex:1;display:flex;flex-direction:column;min-width:0;background:#f0f0f0}
.stage{flex:1;position:relative;background:#fff;min-height:0;border-left:1px solid #bbb}
.scene{width:100%;height:100%}
.t7{font:7px "Liberation Sans",Arial,sans-serif;fill:#222}
.brand{font:6px "Liberation Sans",Arial,sans-serif;fill:#222}
.bold{font-weight:700;fill:#000}
.sup{font-size:3px}
.cube{font:600 5px "Open Sans",sans-serif;fill:#888}
.axis{font:10px "Liberation Sans",Arial,sans-serif;fill:#222}
.mdi{position:absolute;top:4px;right:2px;display:flex;gap:3px}
.mdi svg{width:6px;height:6px}
.navbar{position:absolute;top:78px;right:1px;width:18px;display:flex;flex-direction:column;align-items:center;background:#f4f4f4;border:1px solid #bbb;border-radius:3px;padding:1px}
.navbar button{width:14px;height:15px;display:grid;place-items:center}
.navbar button:nth-of-type(1){height:19px}
.navbar svg{width:9px;height:9px}
.navbar .w{width:13px;height:13px}
.navbar .act{background:#cfe2f3;margin-top:3px}
.navbar .car{margin:1px 0;border-top-color:#666}
.dot{width:4px;height:4px;border:1px solid #999;border-radius:50%;align-self:flex-end;margin:1px}
.docs{display:flex;height:15px;border-top:1px solid #555;padding-left:1px}
.doc{display:flex;align-items:center;gap:2px;background:#fff;margin:-1px 0 2px;padding:0 4px 0 1px;font-family:Roboto,"Liberation Sans",Arial,sans-serif}
.doc .x{background:#c22f36;width:7px;height:7px;display:grid;place-items:center}
.doc .x svg{width:6px;height:6px}

footer{display:flex;align-items:center;height:11px;border-top:1px solid #999;background:linear-gradient(#d6d6d6,#ececec)}
.lg{margin-left:auto;display:flex;gap:2px;padding-right:5px;border-right:1px solid #bbb}
.end{padding:0 2px 0 3px}
```
FILE: mesh.js
```
// Triangulated surfaces for the part model.
let seed = 7;
function rnd() {
  seed = (seed * 16807) % 2147483647;
  return seed / 2147483647;
}
const shades = ['#2fe6a4', '#2adb99', '#25cf8f', '#21c486', '#1db87c'];

// Builds a jittered grid of nu x nv cells and maps it to the screen with place(u, v).
function surface(id, nu, nv, place, line, width) {
  const pts = [];
  for (let j = 0; j <= nv; j++) {
    const row = [];
    for (let i = 0; i <= nu; i++) {
      const u = (i + (j % 2) * 0.5 + (rnd() - 0.5) * 0.4) / nu;
      const v = (j + (rnd() - 0.5) * 0.4) / nv;
      row.push(place(u, v).map(n => n.toFixed(1)).join(' '));
    }
    pts.push(row);
  }
  const paths = shades.map(() => '');
  const tri = (a, b, c) => { paths[Math.floor(rnd() * shades.length)] += 'M' + a + 'L' + b + 'L' + c + 'z'; };
  for (let j = 0; j < nv; j++) {
    for (let i = 0; i < nu; i++) {
      const a = pts[j][i], b = pts[j][i + 1], c = pts[j + 1][i], d = pts[j + 1][i + 1];
      const flip = (j % 2 === 1) !== (rnd() < 0.12);
      if (flip) { tri(a, b, d); tri(a, d, c); } else { tri(a, b, c); tri(b, d, c); }
    }
  }
  const g = document.getElementById(id);
  paths.forEach((d, k) => {
    const p = document.createElementNS('http://www.w3.org/2000/svg', 'path');
    p.setAttribute('d', d);
    p.setAttribute('fill', shades[k]);
    p.setAttribute('stroke', line);
    p.setAttribute('stroke-width', width);
    g.appendChild(p);
  });
}

// Side wall: equal steps round the cylinder, so cells narrow towards both edges.
surface('mBody', 66, 64, (u, v) => {
  const s = Math.max(-1, Math.min(1, 2.02 * u - 1.02));
  const a = s * Math.PI / 2;
  return [572 + 121 * Math.sin(a), 110 + v * 316 + 68 * Math.cos(a)];
}, '#04492f', 0.5);

// Slanted top face, rows running along the slant.
surface('mFace', 52, 42, (u, v) => {
  const x = (u - 0.5) * 262, y = (v - 0.5) * 190, c = 0.616, s = 0.788;
  return [567 + x * c + y * s, 242 - x * s + y * c];
}, '#04502f', 0.5);

// Inside wall of the bore.
surface('mBore', 26, 29, (u, v) => {
  const a = (u - 0.5) * 2.6;
  return [573 + 62 * Math.sin(a) / 0.96, 160 + v * 145 + 14 * (1 - Math.cos(a))];
}, '#04492f', 0.5);
```
